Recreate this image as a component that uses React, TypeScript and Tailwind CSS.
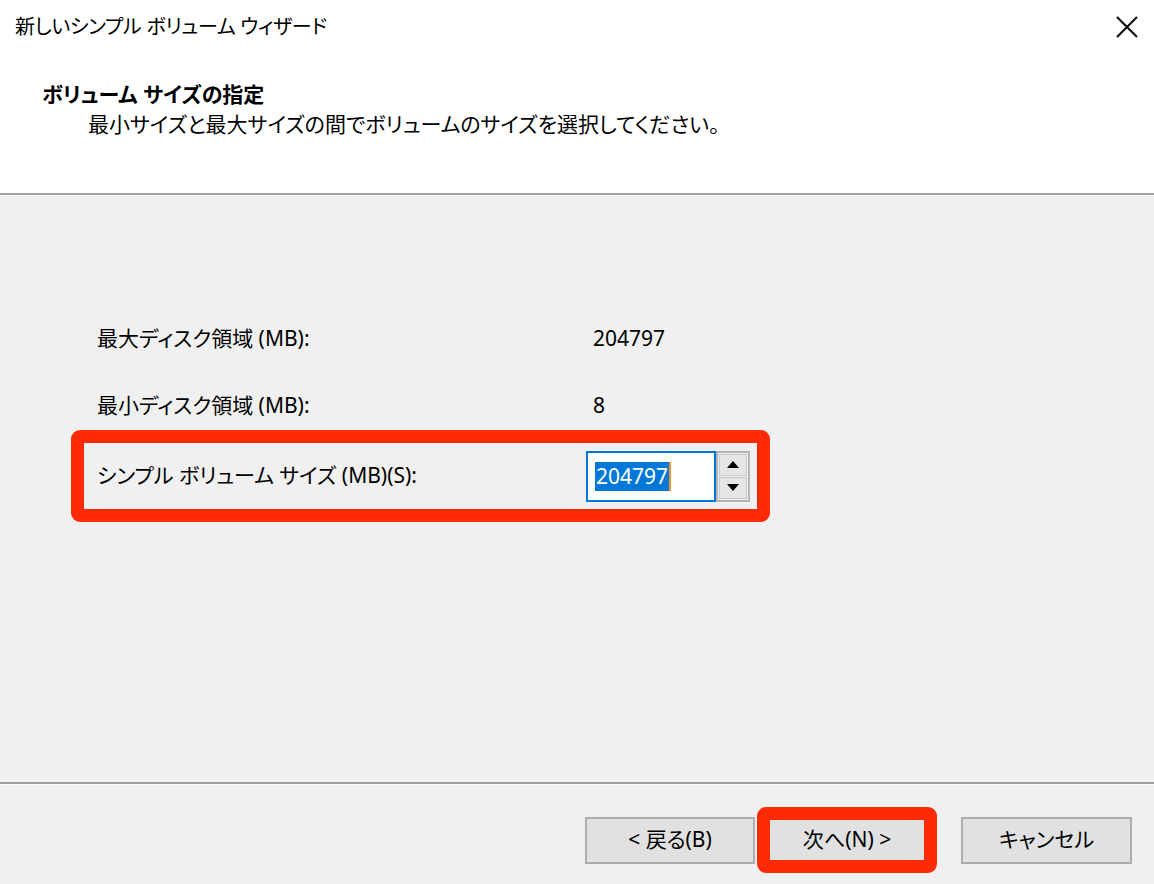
import React from "react";

const font =
  "font-['Noto_Sans','Noto_Sans_CJK_JP',sans-serif] [font-feature-settings:'palt']";

function Spinner() {
  return (
    <div className="flex flex-col w-[34px] h-[51px] border-2 border-[#b4b4b4] bg-[#f0f0f0] p-[1px] gap-[1px]">
      <div className="flex-1 flex items-center justify-center bg-[#e5e5e5] border border-[#c8c8c8]">
        <svg width="12" height="7" viewBox="0 0 12 7">
          <path d="M6 0 L12 7 L0 7 Z" fill="#000" />
        </svg>
      </div>
      <div className="flex-1 flex items-center justify-center bg-[#e5e5e5] border border-[#c8c8c8]">
        <svg width="12" height="7" viewBox="0 0 12 7">
          <path d="M0 0 L12 0 L6 7 Z" fill="#000" />
        </svg>
      </div>
    </div>
  );
}

export default function App() {
  return (
    <div className={`w-[1154px] h-[884px] flex flex-col bg-white text-black ${font}`}>
      {/* header */}
      <div className="h-[193px] bg-white flex flex-col">
        <div className="h-[54px] flex items-center justify-between pl-[15px] pr-[16px]">
          <div className="text-[20px] leading-[28px] tracking-[-0.3px]">新しいシンプル ボリューム ウィザード</div>
          <svg width="22" height="22" viewBox="0 0 22 22">
            <path d="M1 1 L21 21 M21 1 L1 21" stroke="#111" strokeWidth="2.2" />
          </svg>
        </div>
        <div className="pl-[42px] pt-[26px]">
          <div className="text-[21px] leading-[28px] font-bold">ボリューム サイズの指定</div>
          <div className="pl-[46px] text-[21px] leading-[28px] mt-[2px]">
            最小サイズと最大サイズの間でボリュームのサイズを選択してください。
          </div>
        </div>
      </div>
      <div className="h-[2px] bg-[#a0a0a0]" />
      <div className="h-[1px] bg-white" />

      {/* body */}
      <div className="flex-1 bg-[#f0f0f0] flex flex-col pt-[123px]">
        <div className="h-[40px] flex items-center pl-[97px] text-[21px]">
          <div className="w-[496px]">最大ディスク領域 (MB):</div>
          <div>204797</div>
        </div>
        <div className="h-[40px] flex items-center pl-[97px] text-[21px] mt-[27px]">
          <div className="w-[496px]">最小ディスク領域 (MB):</div>
          <div>8</div>
        </div>
        <div className="ml-[71px] mt-[4px] w-[699px] h-[92px] border-[13px] border-[#ff2b06] rounded-[9px] flex items-center pl-[13px] text-[21px]">
          <div className="w-[489px]">シンプル ボリューム サイズ (MB)(S):</div>
          <div className="flex items-center">
            <div className="w-[130px] h-[51px] border-2 border-[#0078d7] bg-white flex items-center pl-[7px]">
              <span className="bg-[#0078d7] text-white leading-[29px] h-[29px] px-[1px]">204797</span>
              <span className="w-[2px] h-[29px] bg-[#f7931e]" />
            </div>
            <Spinner />
          </div>
        </div>
      </div>
      <div className="h-[2px] bg-[#a0a0a0]" />
      <div className="h-[1px] bg-white" />

      {/* footer */}
      <div className="h-[99px] bg-[#f0f0f0] flex items-start justify-end pr-[22px] pt-[22px] text-[21px]">
        <div className="h-[66px] flex items-center">
          <button className="w-[170px] h-[47px] bg-[#e1e1e1] border-2 border-[#adadad] flex items-center justify-center">
            &lt; 戻る(B)
          </button>
          <div className="ml-[2px] w-[180px] h-[66px] border-[13px] border-[#ff2b06] rounded-[9px] bg-[#e1e1e1] flex items-center justify-center">
            次へ(N) &gt;
          </div>
          <button className="ml-[24px] w-[171px] h-[47px] bg-[#e1e1e1] border-2 border-[#adadad] flex items-center justify-center">
            キャンセル
          </button>
        </div>
      </div>
    </div>
  );
}
